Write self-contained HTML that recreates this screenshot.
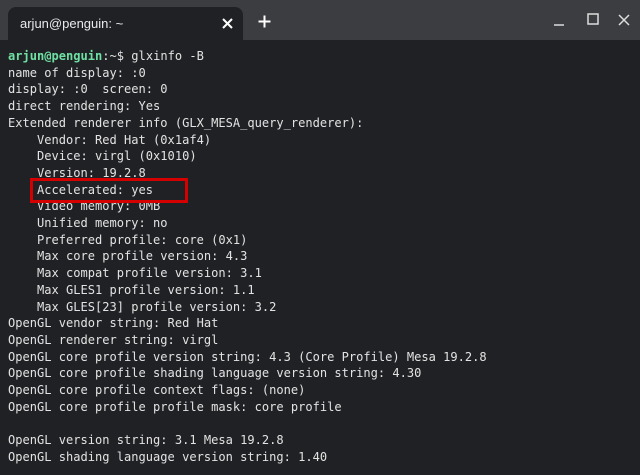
<!DOCTYPE html>
<html><head><meta charset="utf-8"><style>
html,body{margin:0;padding:0;width:640px;height:475px;overflow:hidden;background:#202124}
.top{position:absolute;left:0;top:0;width:640px;height:40px;background:#3c3d41}
.tab{position:absolute;left:8px;top:7px;width:235px;height:33px;background:#202124;border-radius:8px 8px 0 0}
.tab span{position:absolute;left:12px;top:9px;font:13px "Liberation Sans",sans-serif;color:#e8eaed}
.x{position:absolute;left:214px;top:11px}
pre{position:absolute;left:8px;top:48px;margin:0;font-family:"DejaVu Sans Mono","Liberation Mono",monospace;font-size:12.05px;line-height:16.7px;color:#e3e3e3}
.g{color:#6fe0a4;font-weight:bold}
.box{position:absolute;left:30px;top:178px;width:152px;height:19px;border:3px solid #d40000}
</style></head><body>
<div class="top">
<div class="tab"><span>arjun@penguin: ~</span>
<svg class="x" width="11" height="11" viewBox="0 0 11 11"><path d="M1 1L10 10M10 1L1 10" stroke="#fff" stroke-width="2"/></svg></div>
<svg style="position:absolute;left:258px;top:15px" width="13" height="13" viewBox="0 0 13 13"><path d="M6.5 0.5V12.5M0.5 6.5H12.5" stroke="#fff" stroke-width="2"/></svg>
<svg style="position:absolute;left:553px;top:14px" width="12" height="12"><path d="M1 11H11" stroke="#ddd" stroke-width="1.5"/></svg>
<svg style="position:absolute;left:587px;top:13px" width="12" height="12"><rect x="1" y="1" width="10" height="10" fill="none" stroke="#ddd" stroke-width="1.5"/></svg>
<svg style="position:absolute;left:618px;top:14px" width="12" height="12"><path d="M1 1L11 11M11 1L1 11" stroke="#ddd" stroke-width="1.5"/></svg>
</div>
<pre><span class="g">arjun@penguin</span>:~$ glxinfo -B
name of display: :0
display: :0  screen: 0
direct rendering: Yes
Extended renderer info (GLX_MESA_query_renderer):
    Vendor: Red Hat (0x1af4)
    Device: virgl (0x1010)
    Version: 19.2.8
    Accelerated: yes
    Video memory: 0MB
    Unified memory: no
    Preferred profile: core (0x1)
    Max core profile version: 4.3
    Max compat profile version: 3.1
    Max GLES1 profile version: 1.1
    Max GLES[23] profile version: 3.2
OpenGL vendor string: Red Hat
OpenGL renderer string: virgl
OpenGL core profile version string: 4.3 (Core Profile) Mesa 19.2.8
OpenGL core profile shading language version string: 4.30
OpenGL core profile context flags: (none)
OpenGL core profile profile mask: core profile

OpenGL version string: 3.1 Mesa 19.2.8
OpenGL shading language version string: 1.40</pre>
<div class="box"></div>
</body></html>
